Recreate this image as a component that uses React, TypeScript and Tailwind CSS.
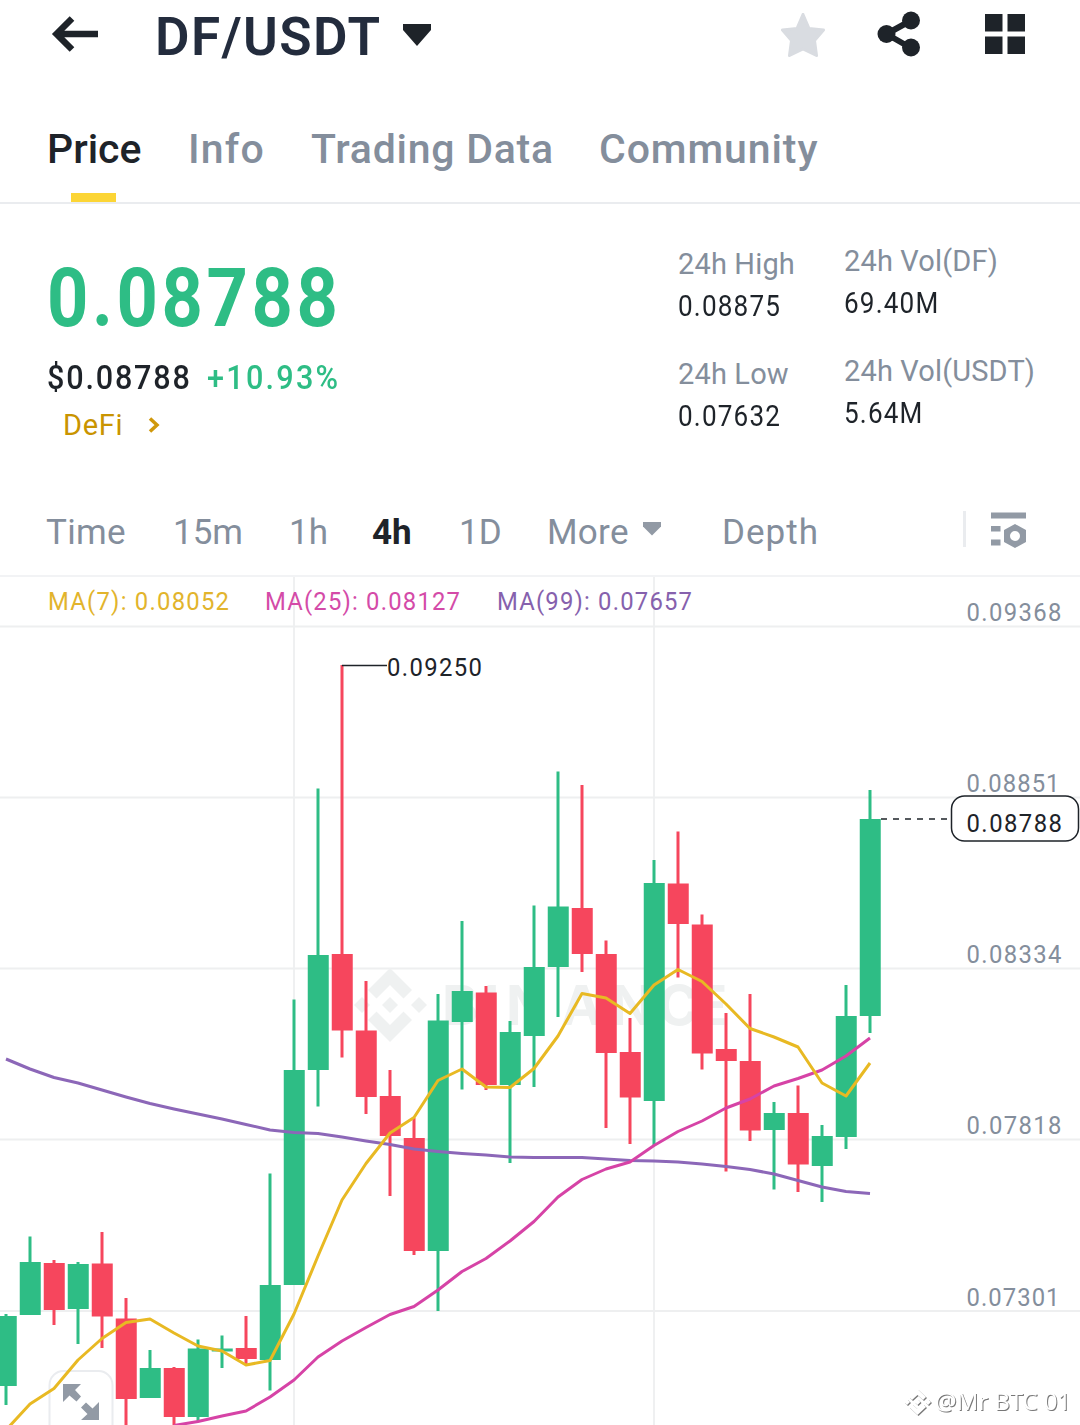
type Candle = {
  high: number;
  top: number;
  bottom: number;
  low: number;
  up: boolean;
};

const UP = '#2ebd85';
const DOWN = '#f6465d';

const c = (up: boolean, high: number, top: number, bottom: number, low: number): Candle => ({
  up,
  high,
  top,
  bottom,
  low,
});

// one candle every 24px, the first one is centered on x = 6
const candles: Candle[] = [
  c(true, 1314, 1316, 1386, 1405),
  c(true, 1236.5, 1262, 1315, 1315),
  c(false, 1260, 1263, 1310, 1325),
  c(true, 1262, 1264, 1309, 1344),
  c(false, 1232, 1263.5, 1316.5, 1348),
  c(false, 1298, 1318.5, 1399, 1430),
  c(true, 1350, 1368, 1398, 1398),
  c(false, 1367, 1368, 1417, 1426),
  c(true, 1339.5, 1348.5, 1417, 1422),
  c(true, 1335.5, 1348.5, 1351.5, 1368),
  c(false, 1316, 1348, 1359, 1365),
  c(true, 1173.5, 1285, 1360, 1390.5),
  c(true, 999.5, 1070, 1285, 1285),
  c(true, 788.5, 955, 1070, 1106.5),
  c(false, 665, 954, 1030.5, 1057.5),
  c(false, 981, 1030.5, 1097, 1114),
  c(false, 1070, 1096, 1136, 1196),
  c(false, 1118, 1138, 1251, 1255),
  c(true, 994, 1020.5, 1251, 1311),
  c(true, 921, 991, 1022, 1089.5),
  c(false, 986, 992.5, 1085, 1090),
  c(true, 1021, 1032, 1085, 1163),
  c(true, 905.5, 967, 1036, 1087),
  c(true, 771.5, 906.5, 967, 1017),
  c(false, 785, 908, 954, 972),
  c(false, 940.5, 954, 1053, 1128),
  c(false, 1018, 1052, 1097.5, 1144),
  c(true, 860, 883, 1101, 1145),
  c(false, 831.5, 883.5, 924, 977.5),
  c(false, 914.5, 924.5, 1053.5, 1069.5),
  c(false, 1013, 1049, 1061, 1171.5),
  c(false, 994, 1061, 1130.5, 1141),
  c(true, 1102, 1113, 1130, 1189.5),
  c(false, 1085.5, 1113, 1164.5, 1192),
  c(true, 1125, 1136, 1166, 1202),
  c(true, 985, 1016, 1137, 1149),
  c(true, 790, 819, 1016, 1033),
];

const ma7 = [
  1430, 1404, 1388.5, 1360, 1338.5, 1322.5, 1319, 1333, 1346, 1351, 1365, 1360.5, 1314, 1256, 1200,
  1163.5, 1133, 1117.5, 1080.5, 1069, 1087, 1087.5, 1068.5, 1036, 993.5, 998, 1013.5, 985, 969.5,
  981.5, 1004, 1028.5, 1037, 1047, 1083, 1096, 1063,
];

const ma25 = [
  1425.5, 1421.5, 1416, 1411, 1397, 1380, 1357, 1341, 1327.5, 1314.5, 1306.5, 1290, 1271.5, 1258.5,
  1241, 1221.5, 1197, 1179.5, 1169, 1162, 1145.5, 1131.5, 1121, 1108, 1099, 1086, 1078.5, 1070,
  1056, 1038,
];

const ma99 = [
  1059, 1069, 1077.5, 1083, 1090, 1097, 1103.5, 1109, 1114, 1119, 1124.5, 1130, 1132.5, 1133.5,
  1137, 1141, 1144.5, 1149, 1151.5, 1153.5, 1155, 1157, 1157.5, 1157.5, 1157.5, 1159, 1160.5, 1161,
  1162, 1164, 1166.5, 1169.5, 1174, 1180.5, 1187, 1191.5, 1193.5,
];

const gridRows = [
  { y: 626.5, label: '0.09368', width: 95 },
  { y: 797.5, label: '0.08851', width: 93 },
  { y: 968.5, label: '0.08334', width: 95 },
  { y: 1139.5, label: '0.07818', width: 95 },
  { y: 1311, label: '0.07301', width: 93 },
];

function toPoints(values: number[], offset = 0) {
  return values.map((y, i) => `${6 + (i + offset) * 24},${y}`).join(' ');
}

function Header() {
  return (
    <header className="flex h-[74px] items-center">
      <svg className="ml-12 h-12 w-14" viewBox="0 0 56 48" fill="none" stroke="#1e2329" strokeWidth="6.5">
        <path d="M24 5.500 8.500 21 24 36.500M9 21H50" />
      </svg>
      <h1 className="ml-[51px] w-[248px] text-[53px] leading-none font-semibold tracking-[1.400px] text-[#232c3d]">
        DF/USDT
      </h1>
      <svg className="h-12 w-7" viewBox="0 0 28 48" fill="#1e2329">
        <path d="M0 11H28V17L14 33 0 17Z" />
      </svg>
      <svg className="ml-[350px] h-12 w-11" viewBox="0 0 44 48" fill="#d9dce1" stroke="#d9dce1" strokeWidth="3" strokeLinejoin="round">
        <path d="M22 1.500 28 15.500 42.500 17 33.500 27.500 35.500 42.500 22 36 8.500 42.500 10.500 27.500 1.500 17 16 15.500Z" />
      </svg>
      <svg className="ml-[52px] h-12 w-11 overflow-visible" viewBox="0 0 44 48" fill="#1e2329">
        <path d="M9.500 21 34 7.500M9.500 21 34 35" stroke="#1e2329" strokeWidth="6" />
        <circle cx="9.500" cy="21" r="9" />
        <circle cx="34" cy="7.500" r="9" />
        <circle cx="34" cy="34.500" r="9" />
      </svg>
      <svg className="ml-16 h-12 w-10" viewBox="0 0 40 48" fill="#1e2329">
        <path d="M0 1H17.500V18.500H0ZM22.500 1H40V18.500H22.500ZM0 23.500H17.500V41H0ZM22.500 23.500H40V41H22.500Z" />
      </svg>
    </header>
  );
}

function Tabs() {
  return (
    <nav className="flex h-[130px] items-end border-b-2 border-[#eaecef] pl-[47px] text-[41px] leading-[48px] font-medium text-[#848e9c]">
      <div className="w-[141px]">
        <div className="flex w-fit flex-col items-center gap-5 text-[#1e2329]">
          <span>Price</span>
          <span className="mr-[2px] h-[9px] w-[45px] bg-[#fcd535]" />
        </div>
      </div>
      <span className="mb-[29px] w-[123px] tracking-[1.200px]">Info</span>
      <span className="mb-[29px] w-[288px] tracking-[0.750px]">Trading Data</span>
      <span className="mb-[29px] tracking-[0.900px]">Community</span>
    </nav>
  );
}

function Stat({ label, value }: { label: string; value: string }) {
  return (
    <div className="h-[110px] text-[29px] leading-[42px]">
      <div className="tracking-[0.150px] whitespace-nowrap text-[#848e9c]">{label}</div>
      <div className="origin-left scale-x-90 tracking-[1.300px] text-[#1e2329]">{value}</div>
    </div>
  );
}

function Summary() {
  return (
    <section className="flex h-[297px] pl-[47px]">
      <div className="w-[631px] pt-[44px]">
        <div className="origin-left scale-x-[0.880] text-[82px] leading-[100px] font-bold tracking-[4.100px] text-[#2ebd85]">
          0.08788
        </div>
        <div className="mt-[7px] flex text-[34px] leading-[44px] font-medium">
          <span className="w-[160px] origin-left scale-x-90 tracking-[2px] text-[#1e2329]">$0.08788</span>
          <span className="origin-left scale-x-90 tracking-[2.500px] text-[#2ebd85]">+10.93%</span>
        </div>
        <div className="flex items-center pt-[6px] pl-[16px] text-[29px] leading-[40px] text-[#c99400]">
          <span className="w-[85px] tracking-[0.700px]">DeFi</span>
          <svg className="h-4 w-3" viewBox="0 0 12 16" fill="none" stroke="#d0980b" strokeWidth="3.500">
            <path d="M2 1.500 9 8 2 14.500" />
          </svg>
        </div>
      </div>
      <div className="w-[166px] pt-[39px]">
        <Stat label="24h High" value="0.08875" />
        <Stat label="24h Low" value="0.07632" />
      </div>
      <div className="pt-[36px]">
        <Stat label="24h Vol(DF)" value="69.40M" />
        <Stat label="24h Vol(USDT)" value="5.64M" />
      </div>
    </section>
  );
}

function Intervals() {
  return (
    <div className="flex h-[76px] items-center border-b-2 border-[#f2f3f5] pb-[9px] pl-[46px] text-[35px] text-[#848e9c]">
      <span className="w-[127px] tracking-[0.300px]">Time</span>
      <span className="w-[116px]">15m</span>
      <span className="w-[83px]">1h</span>
      <span className="w-[87px] font-bold text-[#1e2329]">4h</span>
      <span className="w-[88px]">1D</span>
      <span className="w-[96px] tracking-[0.300px]">More</span>
      <svg className="mb-[10px] h-[14px] w-[18px]" viewBox="0 0 18 14" fill="#929aa5">
        <path d="M0 0H18V4.500L9 13.500 0 4.500Z" />
      </svg>
      <span className="ml-[61px] w-[241px] tracking-[1px]">Depth</span>
      <span className="mb-2.5 h-9 w-[3px] bg-[#eaecef]" />
      <svg className="mb-2 ml-[25px] h-9 w-9" viewBox="0 0 36 36" fill="#929aa5">
        <path d="M0 0.500H35V6.500H0ZM0 14H9.500V19.500H0ZM0 27.500H9.500V33.500H0Z" />
        <path fillRule="evenodd" d="M24 12 35 18V30L24 36 13 30V18ZM24 19A5 5 0 1 0 24 29A5 5 0 1 0 24 19Z" />
      </svg>
    </div>
  );
}

type LabelProps = {
  x: number;
  y: number;
  width: number;
  fill?: string;
  children: string;
};

// condensed digits, stretched back to the given width with letter spacing
function Label({ x, y, width, fill, children }: LabelProps) {
  return (
    <text transform={`translate(${x} ${y}) scale(0.9 1)`} textLength={width / 0.9} fill={fill}>
      {children}
    </text>
  );
}

function Chart() {
  return (
    <svg className="block h-[848px] w-full" viewBox="0 577 1080 848" fontFamily="Roboto, sans-serif" fontSize="26.500">
      <g stroke="#eeeff0" strokeWidth="1.800">
        {gridRows.map((row) => (
          <line key={row.label} x1="0" x2="1080" y1={row.y} y2={row.y} />
        ))}
        <line x1="294" x2="294" y1="576" y2="1425" />
        <line x1="654" x2="654" y1="576" y2="1425" />
      </g>

      {/* watermark */}
      <g fill="#eff1f1">
        <path d="M390 968 412 990 403.500 998.500 390 985 376.500 998.500 368 990Z" />
        <path d="M390 1042 412 1020 403.500 1011.500 390 1025 376.500 1011.500 368 1020Z" />
        <path d="M390 997 398 1005 390 1013 382 1005ZM362 997 370 1005 362 1013 354 1005ZM419 997 427 1005 419 1013 411 1005Z" />
        <text x="442 484 506 561 611 658 694" y="1025" fontFamily="Inter, sans-serif" fontSize="55" fontWeight="700">
          BINANCE
        </text>
      </g>

      <g fill="#848e9c">
        {gridRows.map((row) => (
          <Label key={row.label} x={966.5} y={row.y - 5.5} width={row.width}>
            {row.label}
          </Label>
        ))}
      </g>

      <rect x="49.500" y="1371" width="63" height="70" rx="14" fill="#fff" stroke="#eaecef" strokeWidth="2" />

      {candles.map((candle, i) => {
        const x = 6 + i * 24;
        const color = candle.up ? UP : DOWN;
        return (
          <g key={x} fill={color}>
            <rect x={x - 1.5} y={candle.high} width="3" height={candle.low - candle.high} />
            <rect x={x - 10.25} y={candle.top} width="21" height={candle.bottom - candle.top} />
          </g>
        );
      })}

      <g fill="none" strokeWidth="3" strokeLinejoin="round">
        <polyline points={toPoints(ma99)} stroke="#8c67b8" />
        <polyline points={toPoints(ma25, 7)} stroke="#d643a6" />
        <polyline points={toPoints(ma7)} stroke="#e8b923" />
      </g>

      <path
        d="M63 1384H81L75 1390 81 1396.500 76.500 1401.500 69.500 1395.500 63 1402ZM99 1420H81L87.500 1414 81 1407.500 86 1402.500 92.500 1408.500 99 1402Z"
        fill="#929aa5"
      />

      <Label x={48} y={610} width={181} fill="#e2b42c">MA(7): 0.08052</Label>
      <Label x={265} y={610} width={195} fill="#d44ba8">MA(25): 0.08127</Label>
      <Label x={497} y={610} width={195} fill="#8661ad">MA(99): 0.07657</Label>

      <path d="M342 665.500H387" stroke="#1e2329" strokeWidth="1.500" />
      <Label x={387} y={676} width={95} fill="#1e2329">0.09250</Label>

      <path d="M881 819H948" stroke="#1e2329" strokeWidth="1.500" strokeDasharray="6 6" />
      <rect x="951.500" y="796" width="127" height="45" rx="13" fill="#fff" stroke="#1e2329" strokeWidth="1.500" />
      <Label x={966.5} y={832} width={95.5} fill="#1e2329">0.08788</Label>

      <g className="drop-shadow-[1px_1px_0.500px_#777777]" fill="#fff" fontFamily="Noto Sans, sans-serif">
        <path d="M904 1402 907 1399 910 1402 907 1405ZM909 1397 917.500 1389 926 1397 923 1400 917.500 1395 912 1400ZM914.500 1402 917.500 1399 920.500 1402 917.500 1405ZM925 1402 928 1399 931 1402 928 1405ZM909 1407 912 1404 917.500 1409 923 1404 926 1407 917.500 1415Z" />
        <text x="935" y="1410" fontSize="24" textLength="136">
          @Mr BTC 01
        </text>
      </g>
    </svg>
  );
}

export default function App() {
  return (
    <div className="h-[1425px] w-[1080px] overflow-hidden bg-white font-[Roboto,sans-serif]">
      <Header />
      <Tabs />
      <Summary />
      <Intervals />
      <Chart />
    </div>
  );
}
